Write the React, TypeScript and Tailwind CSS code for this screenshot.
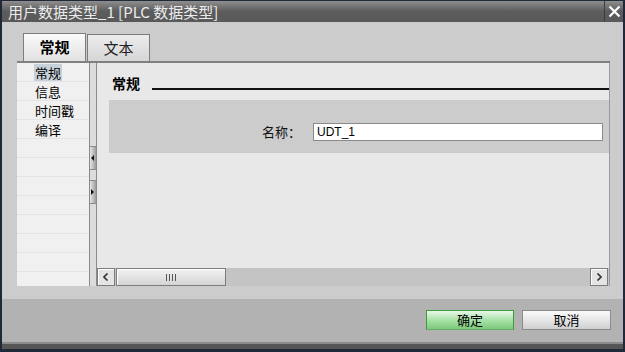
import React from 'react';

const cjk = { fontFamily: '"Noto Sans CJK SC", "Liberation Sans", sans-serif' };

const navItems = ['常规', '信息', '时间戳', '编译', '', '', '', '', '', '', '', ''];

function ScrollButton({ dir }: { dir: 'left' | 'right' }) {
  return (
    <div className="w-[18px] h-[18px] border border-[#7c7c7c] bg-[#e4e4e4] shadow-[inset_1px_1px_0_#fff] flex items-center justify-center">
      <svg width="6" height="8" viewBox="0 0 6 8">
        {dir === 'left' ? (
          <path d="M4.5 0.5 L1 4 L4.5 7.5" stroke="#333" strokeWidth="1.6" fill="none" />
        ) : (
          <path d="M1.5 0.5 L5 4 L1.5 7.5" stroke="#333" strokeWidth="1.6" fill="none" />
        )}
      </svg>
    </div>
  );
}

export default function App() {
  return (
    <div
      className="w-[625px] h-[352px] flex flex-col bg-[#cccccc] border-t border-x-2 border-b-[3px] border-[#1f2937] overflow-hidden"
      style={cjk}
    >
      {/* Title bar */}
      <div className="h-[21px] flex bg-gradient-to-b from-[#8e8e8e] via-[#5c5c5c] to-[#595959]">
        <div className="flex-1 pl-[6px] text-[15px] leading-[21px] text-[#ececec] whitespace-nowrap">
          用户数据类型_1 [PLC 数据类型]
        </div>
        <div className="w-[19px] border-l border-[#3c3c3c] flex items-center justify-center">
          <svg width="13" height="13" viewBox="0 0 13 13">
            <path d="M1.5 1.5 L11.5 11.5 M11.5 1.5 L1.5 11.5" stroke="#fff" strokeWidth="2.2" />
          </svg>
        </div>
      </div>

      {/* Body */}
      <div className="flex-1 flex flex-col pl-[15px] pr-[13px] pt-[11px]">
        {/* Tabs */}
        <div className="flex ml-[6px] h-[28px] gap-[1px]">
          <div className="w-[63px] border border-b-0 border-[#7c7c7c] bg-gradient-to-b from-[#fafafa] to-[#e2e2e2] flex items-center justify-center text-[15px] font-bold text-black">
            常规
          </div>
          <div className="w-[63px] mt-[1px] border border-b-0 border-[#7c7c7c] bg-gradient-to-b from-[#ececec] to-[#d6d6d6] flex items-center justify-center text-[15px] text-[#222]">
            文本
          </div>
        </div>

        {/* Panel */}
        <div className="h-[225px] flex border-t-2 border-[#808080]">
          {/* Nav */}
          <div className="w-[72px] bg-[#f0f0f0] flex flex-col overflow-hidden">
            {navItems.map((item, i) => (
              <div key={i} className="h-[19px] shrink-0 border-b border-[#e4e4e4] pl-[17px] flex items-center">
                {item && (
                  <span className={`text-[13px] leading-[17px] px-[1px] text-black ${i === 0 ? 'bg-[#c8d0d9]' : ''}`}>
                    {item}
                  </span>
                )}
              </div>
            ))}
          </div>

          {/* Splitter */}
          <div className="w-[8px] border-x border-[#8a8a8a] bg-[#dcdcdc] flex flex-col">
            <div className="h-[83px]" />
            <div className="h-[24px] border-y border-[#8a8a8a] bg-gradient-to-r from-[#e6e6e6] to-[#9c9c9c] flex items-center">
              <svg width="6" height="8" viewBox="0 0 6 8">
                <path d="M4 1 L1 4 L4 7 Z" fill="#111" />
              </svg>
            </div>
            <div className="h-[10px]" />
            <div className="h-[24px] border-y border-[#8a8a8a] bg-gradient-to-r from-[#e6e6e6] to-[#9c9c9c] flex items-center">
              <svg width="6" height="8" viewBox="0 0 6 8">
                <path d="M1 1 L4 4 L1 7 Z" fill="#111" />
              </svg>
            </div>
          </div>

          {/* Content */}
          <div className="flex-1 flex flex-col bg-[#e8e8e8] border-r border-[#9a9a9a]">
            <div className="flex-1 pl-[12px]">
              <div className="flex items-end pt-[11px] h-[28px]">
                <span className="text-[14px] font-bold leading-[16px] pl-[3px] text-black">常规</span>
                <div className="flex-1 ml-[12px] h-[2px] bg-[#111] mb-[1px]" />
              </div>
              <div className="mt-[9px] h-[53px] bg-[#cccccc] flex items-center justify-end pr-[6px] pt-[10px]">
                <span className="text-[13px] text-[#111] mr-[12px]">名称：</span>
                <div className="w-[290px] h-[18px] bg-white border border-[#8a8a8a] pl-[3px] text-[12px] leading-[16px] text-black" style={{ fontFamily: '"Liberation Sans", sans-serif' }}>
                  UDT_1
                </div>
              </div>
            </div>
            {/* Horizontal scrollbar */}
            <div className="h-[18px] bg-[#c4c4c4] flex items-start">
              <ScrollButton dir="left" />
              <div className="ml-[1px] w-[110px] h-[18px] border border-[#7c7c7c] bg-gradient-to-b from-[#f2f2f2] to-[#d4d4d4] shadow-[inset_1px_1px_0_#fff] flex items-center justify-center gap-[2px]">
                <span className="w-[1px] h-[7px] bg-[#555]" />
                <span className="w-[1px] h-[7px] bg-[#555]" />
                <span className="w-[1px] h-[7px] bg-[#555]" />
                <span className="w-[1px] h-[7px] bg-[#555]" />
              </div>
              <div className="flex-1" />
              <div className="mr-[1px]">
                <ScrollButton dir="right" />
              </div>
            </div>
          </div>
        </div>
        <div className="flex-1" />
      </div>

      {/* Bottom bar */}
      <div className="h-[43px] bg-[#b2b2b2] flex items-start justify-end pr-[12px] pt-[11px] gap-[8px]">
        <button className="w-[88px] h-[20px] border border-[#3f9a3f] border-b-[#6aa86a] bg-gradient-to-b from-[#e9f8e9] via-[#a8e2a8] to-[#7cc97c] text-[13px] leading-[18px] text-black" style={cjk}>
          确定
        </button>
        <button className="w-[89px] h-[20px] border border-[#8a8a8a] bg-gradient-to-b from-[#fafafa] via-[#e6e6e6] to-[#cfcfcf] text-[13px] leading-[18px] text-black" style={cjk}>
          取消
        </button>
      </div>
      <div className="h-[2px] bg-[#8c8c8c]" />
      <div className="h-[5px] bg-[#555555]" />
    </div>
  );
}
